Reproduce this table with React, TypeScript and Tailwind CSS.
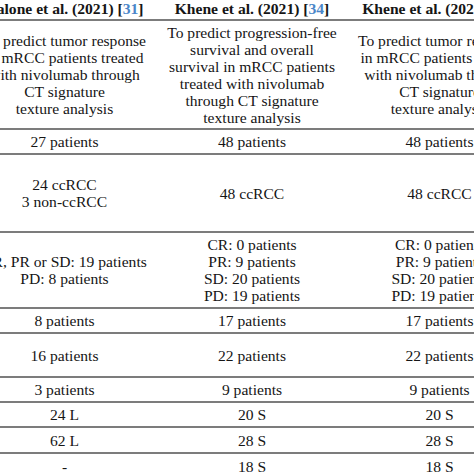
import React from "react";

type Row = {
  h: string;
  cells: React.ReactNode[];
};

const Ref = ({ n }: { n: string }) => (
  <>
    [<span className="text-[#4a86c8]">{n}</span>]
  </>
);

const lines = (items: string[]) => (
  <>
    {items.map((t) => (
      <div key={t}>{t}</div>
    ))}
  </>
);

const rows: Row[] = [
  {
    h: "h-[109px]",
    cells: [
      lines([
        "To predict tumor response",
        "in mRCC patients treated",
        "with nivolumab through",
        "CT signature",
        "texture analysis",
      ]),
      lines([
        "To predict progression-free",
        "survival and overall",
        "survival in mRCC patients",
        "treated with nivolumab",
        "through CT signature",
        "texture analysis",
      ]),
      lines([
        "To predict tumor response",
        "in mRCC patients treated",
        "with nivolumab through",
        "CT signature",
        "texture analysis",
      ]),
    ],
  },
  { h: "h-[25px]", cells: ["27 patients", "48 patients", "48 patients"] },
  {
    h: "h-[78px]",
    cells: [lines(["24 ccRCC", "3 non-ccRCC"]), "48 ccRCC", "48 ccRCC"],
  },
  {
    h: "h-[76px]",
    cells: [
      lines(["CR, PR or SD: 19 patients", "PD: 8 patients"]),
      lines(["CR: 0 patients", "PR: 9 patients", "SD: 20 patients", "PD: 19 patients"]),
      lines(["CR: 0 patients", "PR: 9 patients", "SD: 20 patients", "PD: 19 patients"]),
    ],
  },
  { h: "h-[25px]", cells: ["8 patients", "17 patients", "17 patients"] },
  { h: "h-[44px]", cells: ["16 patients", "22 patients", "22 patients"] },
  { h: "h-[25px]", cells: ["3 patients", "9 patients", "9 patients"] },
  { h: "h-[25px]", cells: ["24 L", "20 S", "20 S"] },
  { h: "h-[26px]", cells: ["62 L", "28 S", "28 S"] },
  { h: "h-[26px]", cells: ["-", "18 S", "18 S"] },
];

export default function App() {
  return (
    <div className="w-[474px] h-[474px] overflow-hidden bg-white text-[#151515] font-['Liberation_Serif',serif] text-[15.6px] leading-[17px]">
      <div className="ml-[-29px] w-[562px]">
        <div className="grid grid-cols-[187px_188px_187px] h-[21px] items-end pb-[6px] border-b-2 border-[#7c7c7c] font-bold text-center whitespace-nowrap">
          <div>Calone et al. (2021) <Ref n="31" /></div>
          <div>Khene et al. (2021) <Ref n="34" /></div>
          <div>Khene et al. (2021) <Ref n="34" /></div>
        </div>
        {rows.map((r, i) => (
          <div
            key={i}
            className={`grid grid-cols-[187px_188px_187px] items-center text-center whitespace-nowrap border-b-2 border-[#7c7c7c] ${r.h}`}
          >
            {r.cells.map((c, j) => (
              <div key={j}>{c}</div>
            ))}
          </div>
        ))}
      </div>
    </div>
  );
}
